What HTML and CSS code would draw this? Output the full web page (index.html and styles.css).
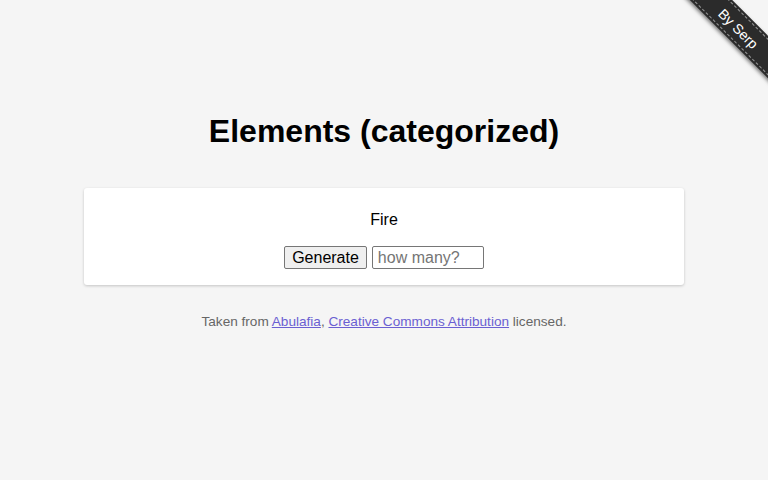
FILE: index.html
```html
<!DOCTYPE html>
<html lang="en">
<head>
    <meta charset="UTF-8">
    <meta name="viewport" content="width=device-width, initial-scale=1.0">
    <title>Elements (categorized)</title>
    <link rel="stylesheet" href="styles.css">
</head>
<body>
    <div class="ribbon-wrap">
        <a class="ribbon" href="#"><span>By Serp</span></a>
    </div>

    <div class="container">
        <h1>Elements (categorized)</h1>
        <div class="card">
            <div class="result" id="result">Fire</div>
            <div class="controls">
                <button type="button" class="btn-generate" onclick="generate()">Generate</button>
                <input type="number" class="count" id="count" placeholder="how many?">
            </div>
        </div>
        <p class="credits">Taken from <a href="#">Abulafia</a>, <a href="#">Creative Commons Attribution</a> licensed.</p>
    </div>

    <script>
        const elements = ['Fire', 'Water', 'Earth', 'Air', 'Lightning', 'Ice', 'Metal', 'Wood'];

        function generate() {
            const n = parseInt(document.getElementById('count').value) || 1;
            const picks = [];
            for (let i = 0; i < n; i++) {
                picks.push(elements[Math.floor(Math.random() * elements.length)]);
            }
            document.getElementById('result').textContent = picks.join(', ');
        }
    </script>
</body>
</html>
```

FILE: styles.css
```css
body {
    font-family: "Liberation Sans", Arial, sans-serif;
    background-color: #f5f5f5;
    color: #000;
    margin: 0;
    padding: 0;
}

.container {
    max-width: 600px;
    margin: 0 auto;
    padding-top: 113px;
}

h1 {
    font-size: 32px;
    line-height: 37px;
    text-align: center;
    margin: 0 0 38px;
}

.card {
    background-color: #fff;
    border-radius: 3px;
    box-shadow: 0 1px 3px rgba(0, 0, 0, 0.2);
    padding: 22px 20px 16px;
    text-align: center;
}

.result {
    font-size: 16px;
    line-height: 20px;
    margin-bottom: 16px;
}

.controls {
    display: flex;
    justify-content: center;
    gap: 5px;
}

.btn-generate {
    font-family: "Liberation Sans", Arial, sans-serif;
    font-size: 16px;
    line-height: 19px;
    padding: 1px 7px;
    background-color: #efefef;
    border: 1px solid #767676;
    border-radius: 2px;
    color: #000;
    cursor: pointer;
}

.count {
    font-family: "Liberation Sans", Arial, sans-serif;
    font-size: 16px;
    line-height: 19px;
    width: 100px;
    padding: 1px 5px;
    border: 1px solid #767676;
    border-radius: 2px;
    -moz-appearance: textfield;
}

.count::-webkit-inner-spin-button,
.count::-webkit-outer-spin-button {
    -webkit-appearance: none;
    margin: 0;
}

.count::placeholder {
    color: #757575;
}

.credits {
    font-size: 13.6px;
    line-height: 16px;
    color: #666;
    text-align: center;
    margin: 29px 0 0;
}

.credits a {
    color: #6a5fd2;
}

.ribbon-wrap {
    position: absolute;
    top: 0;
    right: 0;
    width: 120px;
    height: 120px;
    overflow: hidden;
}

.ribbon {
    position: absolute;
    top: 13px;
    left: -9px;
    width: 200px;
    height: 30px;
    padding: 2px 0;
    box-sizing: border-box;
    background-color: #2b2b2b;
    transform: rotate(45deg);
    box-shadow: 0 2px 4px rgba(0, 0, 0, 0.5);
    color: #fff;
    text-decoration: none;
    font-size: 14px;
}

.ribbon span {
    display: block;
    height: 26px;
    line-height: 26px;
    text-align: center;
    border-top: 1px dashed rgba(255, 255, 255, 0.5);
    border-bottom: 1px dashed rgba(255, 255, 255, 0.5);
    box-sizing: border-box;
}
```
